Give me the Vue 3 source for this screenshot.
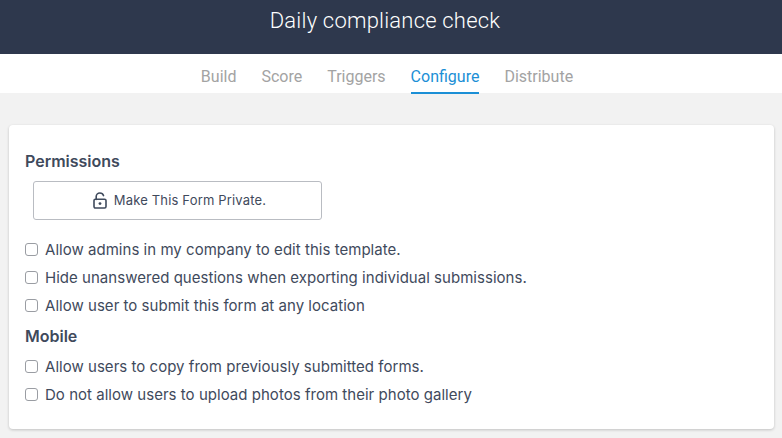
<template>
  <div class="page">
    <header class="title-bar">Daily compliance check</header>

    <nav class="tabs">
      <a v-for="tab in tabs" :key="tab" class="tab" :class="{ active: tab === 'Configure' }">{{ tab }}</a>
    </nav>

    <main class="content">
      <section class="card">
        <h3 class="section-title">Permissions</h3>
        <button class="private-btn">
          <svg class="lock" width="14" height="17" viewBox="0 0 14 17" fill="none">
            <path d="M3.2 7.5V4.6C3.2 2.6 4.8 1 6.9 1c1.7 0 3.1 1 3.6 2.6" stroke="#3f4a5c" stroke-width="1.6" stroke-linecap="round" />
            <rect x="1" y="7.2" width="12" height="8.8" rx="1.4" stroke="#3f4a5c" stroke-width="1.6" />
            <circle cx="7" cy="11.6" r="1.4" fill="#3f4a5c" />
          </svg>
          <span>Make This Form Private.</span>
        </button>

        <label v-for="opt in permissions" :key="opt" class="check-row">
          <input type="checkbox" />
          <span>{{ opt }}</span>
        </label>

        <h3 class="section-title mobile">Mobile</h3>
        <label v-for="opt in mobile" :key="opt" class="check-row">
          <input type="checkbox" />
          <span>{{ opt }}</span>
        </label>
      </section>
    </main>
  </div>
</template>

<script setup>
const tabs = ['Build', 'Score', 'Triggers', 'Configure', 'Distribute']

const permissions = [
  'Allow admins in my company to edit this template.',
  'Hide unanswered questions when exporting individual submissions.',
  'Allow user to submit this form at any location',
]

const mobile = [
  'Allow users to copy from previously submitted forms.',
  'Do not allow users to upload photos from their photo gallery',
]
</script>

<style>
html, body { margin: 0; background: #f2f2f2; }
</style>

<style scoped>
.page {
  height: 438px; overflow: hidden; background: #f2f2f2;
  font-family: Inter, Roboto, "Liberation Sans", sans-serif; color: #3f4a5c;
}

.title-bar {
  height: 54px; box-sizing: border-box; padding: 7px 12px 0 0;
  background: #2e384d; color: #fff;
  font-family: Roboto, sans-serif; font-weight: 300;
  font-size: 22px; line-height: 28px; text-align: center; letter-spacing: 0.2px;
}

.tabs {
  height: 39px; background: #fff; padding-right: 8px;
  display: flex; justify-content: center; gap: 25px;
}
.tab {
  height: 39px; box-sizing: border-box; padding-top: 13px;
  font-family: Roboto, sans-serif;
  font-size: 16px; line-height: 20px; color: #a3a3a3;
}
.tab.active { color: #1b8fd6; border-bottom: 2px solid #1b8fd6; height: 40px; }

.content { padding: 32px 8px 0 9px; }

.card {
  height: 304px; box-sizing: border-box; padding: 26px 16px 0;
  background: #fff; border-radius: 4px;
  box-shadow: 0 1px 3px rgba(0,0,0,0.2);
}

.section-title {
  margin: 0; font-size: 16px; line-height: 20px; font-weight: 600;
}
.section-title.mobile { margin-top: 7px; margin-bottom: 6px; }

.private-btn {
  width: 289px; height: 39px; margin: 10px 0 15px 8px; padding: 0 0 2px 4px;
  display: flex; align-items: center; justify-content: center; gap: 7px;
  background: #fff; border: 1px solid #b9bcc2; border-radius: 3px;
  font-family: inherit; font-size: 13px; color: #3f4a5c; letter-spacing: 0.17px;
}
.lock { display: block; margin-top: 2px; }

.check-row {
  display: flex; align-items: center; height: 28px;
  font-size: 15px; letter-spacing: 0.03px;
}
.check-row input {
  appearance: none;
  width: 13px; height: 13px; margin: 0 7px 0 0; flex: none;
  background: #fff; border: 1px solid #9a9da3; border-radius: 3px;
}
</style>
